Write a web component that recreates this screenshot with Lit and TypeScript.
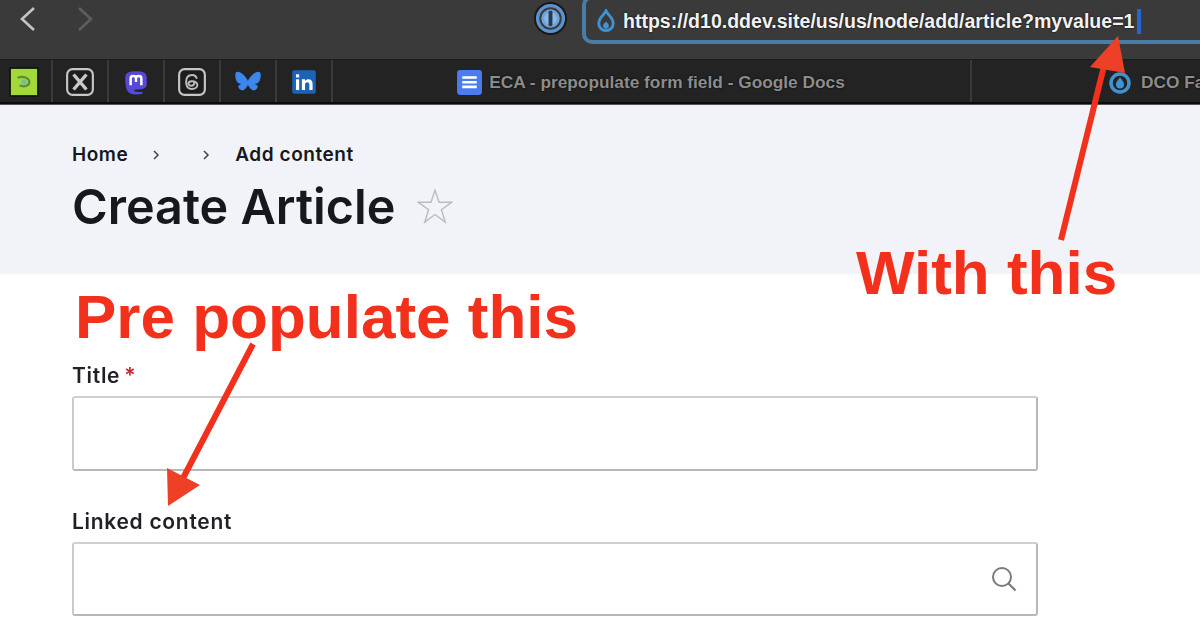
import { LitElement, html, css, svg } from "lit";
import { customElement } from "lit/decorators.js";

const drop = (size: number) => html`<svg class="drop" width=${size} height=${size} viewBox="0 0 20 20"><path d="M10 1.500C9 4.500 4 7 4 12a6 6 0 0 0 12 0C16 7 11 4.500 10 1.500Z" fill="none" stroke="#3f93d3" stroke-width="2.400"/><path d="M10 10.500c-1 1.200-2.400 2-2.400 3.500a2.400 2.400 0 0 0 4.800 0c0-1.500-1.400-2.300-2.400-3.500Z" fill="#3f93d3"/></svg>`;

const pinned = [
  svg`<rect x="1" y="1" width="26" height="26" fill="#a3d83a" stroke="#10140a" stroke-width="1.500"/><path d="M8 10c5-2 11 0 11 4s-6 5-9 3" fill="none" stroke="#5d8a3a" stroke-width="2"/><circle cx="14" cy="14" r="2.500" fill="#6fc0a0"/>`,
  svg`<rect x="2" y="2" width="24" height="24" rx="5" fill="#1d1d1d" stroke="#c6c6c6" stroke-width="2"/><path d="M8 7l12 14M20 7L8 21" stroke="#c9c9c9" stroke-width="3.200"/>`,
  svg`<path d="M4 10c0-5 4-6 10-6s10 1 10 6v6c0 4-4 5-9 5l-3 .5c1 2 5 2 8 1.500v2c-5 1.500-14 1-15-5-1-3-1-7-1-10Z" fill="#5549d6"/><path d="M9 17v-6.500c0-2.800 5-2.800 5 0V14m0-3.500c0-2.800 5-2.800 5 0V17" fill="none" stroke="#fff" stroke-width="2.300"/>`,
  svg`<rect x="2" y="2" width="24" height="24" rx="5" fill="#1d1d1d" stroke="#c6c6c6" stroke-width="2"/><path d="M18.500 11c-.6-2.500-2.200-3.500-4.500-3.500-3.500 0-5.500 2.500-5.500 6.500s2 6.500 5.500 6.500c3 0 5-1.700 5-3.700 0-2.500-2.500-3.800-5.500-3.500-2 .2-2.800 1.200-2.800 2.200 0 1.300 1.300 2 2.600 2 1.800 0 3-1.200 3-4" fill="none" stroke="#bdbdbd" stroke-width="1.800"/>`,
  svg`<path d="M14 13C12.600 10 8 4.500 4.500 4.500 1.500 4.500 2 8 2.500 11c.6 3.500 3 5 6 4.800-3 .5-5 2-2.500 4.700 3.500 3.500 6.500-1 8-4 1.500 3 4.500 7.500 8 4 2.500-2.700.5-4.200-2.500-4.700 3 .2 5.400-1.300 6-4.800.5-3 1-6.500-2-6.500C20 4.500 15.400 10 14 13Z" fill="#3b87ee"/>`,
  svg`<rect x="3" y="3" width="22" height="22" rx="2" fill="#1c62b9"/><rect x="6.500" y="11.500" width="3" height="10" fill="#fff"/><rect x="6.500" y="6.800" width="3" height="3" fill="#fff"/><path d="M12 21.500V11.500h3v1.500c1.500-2.500 7-2.500 7 2.500v6h-3v-5.500c0-2.500-4-2.500-4 0v5.500Z" fill="#fff"/>`,
];

@customElement("app-root")
export class AppRoot extends LitElement {
  static styles = css`
    :host { display: block; width: 1200px; height: 630px; overflow: hidden; position: relative; background: #fff; font-family: Inter, "Liberation Sans", sans-serif; }
    .soft { filter: blur(0.5px); }
    .toolbar { height: 59px; background: #3a3a3a; display: flex; align-items: flex-start; }
    .nav { display: flex; gap: 39px; padding: 6px 0 0 19px; width: 534px; box-sizing: border-box; }
    .onepass { margin-top: 2px; width: 33px; height: 33px; flex: none; }
    .url { margin: -5px 0 0 15px; flex: 1; height: 49px; border: 4px solid #4a7ca8; border-right: none; border-radius: 10px 0 0 10px; box-sizing: border-box; display: flex; align-items: center; padding: 3px 0 0 8px; gap: 5px; }
    .url-text { font: 700 19.550px "Liberation Sans", sans-serif; color: #f2f2f2; text-shadow: 0 0 2px #000; white-space: nowrap; }
    .caret { width: 4px; height: 25px; background: #2a62d8; margin-left: -2px; }
    .tabs { height: 43px; background: #232323; display: flex; border-top: 1px solid #1b1b1b; box-sizing: border-box; }
    .pin { width: 56px; box-sizing: border-box; border-right: 2px solid #3a3a3a; display: flex; align-items: center; justify-content: center; padding: 2px 1px 0 0; }
    .pin:first-child { width: 53px; padding-right: 3px; }
    .tab { display: flex; align-items: center; font: 700 17.300px "Liberation Sans", sans-serif; color: #8d8d8d; text-shadow: 0 0 2px #000; white-space: nowrap; box-sizing: border-box; padding-top: 3px; }
    .tab.doc { width: 639px; justify-content: center; gap: 6px; border-right: 2px solid #3a3a3a; padding-right: 2px; }
    .tab.dco { flex: 1; padding-left: 137px; gap: 10px; overflow: hidden; }
    .dot { width: 22px; height: 22px; flex: none; }
    .rule { height: 3px; background: linear-gradient(#0c0c0c 66%, #9a9a9a); }
    .head { height: 169px; background: #f2f3f9; padding: 39px 0 0 72px; box-sizing: border-box; }
    .crumbs { display: flex; align-items: center; font-size: 19px; font-weight: 600; letter-spacing: .55px; color: #16181d; line-height: 22px; }
    .sep { display: block; }
    .sep.a { margin: 0 0 0 24px; }
    .sep.b { margin: 0 25px 0 42px; }
    .title { display: flex; align-items: center; gap: 22px; margin-top: 16px; }
    .title svg { margin-top: -2px; }
    h1 { margin: 0; font-size: 48.500px; font-weight: 600; color: #16181d; line-height: 50px; }
    .form { padding: 91px 0 0 72px; width: 966px; box-sizing: content-box; }
    label { display: block; font-size: 21px; font-weight: 600; letter-spacing: .7px; color: #1f2126; line-height: 22px; }
    label span { color: #c8252c; margin-left: 4px; }
    .field { height: 75px; margin: 9px 0 40px; border: 2px solid #cacaca; border-top-color: #cfcfcf; border-bottom-color: #b8b8b8; border-right-color: #b8b8b8; border-radius: 3px; box-sizing: border-box; background: #fff; display: flex; align-items: center; justify-content: flex-end; padding: 0 18px 0 0; }
    .field.l { height: 74px; }
    .ann { position: absolute; font: 700 62px "Liberation Sans", sans-serif; color: #f2301c; white-space: nowrap; line-height: 70px; }
    .ann.pre { left: 75px; top: 282px; }
    .ann.with { left: 856px; top: 238px; }
    .arrows { position: absolute; left: 0; top: 0; }
  `;

  render() {
    return html`
      <div class="soft">
        <div class="toolbar">
          <div class="nav">
            <svg width="18" height="26" viewBox="0 0 18 26"><path d="M15 2 3 13l12 11" fill="none" stroke="#c4c4c4" stroke-width="2.600"/></svg>
            <svg width="18" height="26" viewBox="0 0 18 26"><path d="M3 2l12 11L3 24" fill="none" stroke="#5e5e5e" stroke-width="2.600"/></svg>
          </div>
          <svg class="onepass" viewBox="0 0 34 34"><circle cx="17" cy="17" r="16" fill="#5a93cf" stroke="#1d1710" stroke-width="2"/><circle cx="17" cy="17" r="11.500" fill="#3a3a3a" /><circle cx="17" cy="17" r="9.500" fill="#6da3d9"/><circle cx="17" cy="17" r="6.500" fill="#8ab7e3"/><rect x="15" y="9" width="4" height="16" rx="1.500" fill="#253a55"/></svg>
          <div class="url">${drop(24)}<span class="url-text">https://d10.ddev.site/us/us/node/add/article?myvalue=1</span><i class="caret"></i></div>
        </div>
        <div class="tabs">
          ${pinned.map((p) => html`<div class="pin"><svg width="30" height="30" viewBox="0 0 28 28">${p}</svg></div>`)}
          <div class="tab doc">
            <svg width="27" height="27" viewBox="0 0 26 26"><rect x="1" y="1" width="24" height="24" rx="3" fill="#4a7cf0"/><path d="M6 7h14v2.500H6zM6 11.500h14V14H6zM6 16h14v2.500H6z" fill="#fff"/></svg>
            <span>ECA - prepopulate form field - Google Docs</span>
          </div>
          <div class="tab dco">
            <svg class="dot" viewBox="0 0 22 22"><circle cx="11" cy="11" r="9" fill="none" stroke="#3f93d3" stroke-width="3.500"/><path d="M11 5c-1 2.500-4 4-4 7.500a4 4 0 0 0 8 0C15 9 12 7.500 11 5Z" fill="#3f93d3"/></svg>
            <span>DCO Fa</span>
          </div>
        </div>
        <div class="rule"></div>
        <div class="head">
          <div class="crumbs">
            <span>Home</span>
            <svg class="sep a" width="8" height="10" viewBox="0 0 8 10"><path d="M2 1l4 4-4 4" fill="none" stroke="#444" stroke-width="1.500"/></svg>
            <svg class="sep b" width="8" height="10" viewBox="0 0 8 10"><path d="M2 1l4 4-4 4" fill="none" stroke="#444" stroke-width="1.500"/></svg>
            <span>Add content</span>
          </div>
          <div class="title">
            <h1>Create Article</h1>
            <svg width="36" height="36" viewBox="0 0 38 38"><path d="M19 2.500l4.300 12.600H36.500l-10.700 7.900 4 13-10.800-8-10.800 8 4-13L1.500 15.100h13.200Z" fill="none" stroke="#b9bbc2" stroke-width="1.500"/></svg>
          </div>
        </div>
        <div class="form">
          <label>Title<span>*</span></label>
          <div class="field"></div>
          <label>Linked content</label>
          <div class="field l">
            <svg width="28" height="28" viewBox="0 0 28 28"><circle cx="12" cy="12" r="9" fill="none" stroke="#7b7b7b" stroke-width="2"/><path d="M18.500 18.500l7 7" stroke="#7b7b7b" stroke-width="2.200"/></svg>
          </div>
        </div>
        <div class="ann pre">Pre populate this</div>
        <div class="ann with">With this</div>
        <svg class="arrows" width="1200" height="630" viewBox="0 0 1200 630">
          <path d="M253 344 181 482" stroke="#f2301c" stroke-width="6"/>
          <path d="M168 506l-1-38 33 17Z" fill="#ee4026"/>
          <path d="M1061 240 1104 66" stroke="#f2301c" stroke-width="6"/>
          <path d="M1118 36l-28 31 35 6Z" fill="#ee4026"/>
        </svg>
      </div>
    `;
  }
}
